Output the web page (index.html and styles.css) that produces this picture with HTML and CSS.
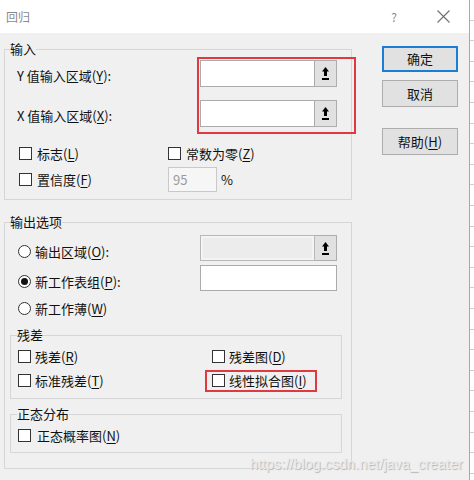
FILE: index.html
```html
<!DOCTYPE html>
<html lang="zh-CN">
<head>
<meta charset="utf-8">
<title>回归</title>
<link rel="stylesheet" href="styles.css">
</head>
<body>
<div class="screen">
  <div class="dialog">
    <div class="titlebar">
      <span class="title">回归</span>
      <span class="tb-help">?</span>
      <svg class="tb-close" width="13" height="13" viewBox="0 0 13 13"><path d="M0.5 0.5 L12.5 12.5 M12.5 0.5 L0.5 12.5" stroke="#707070" stroke-width="1.1" fill="none"/></svg>
    </div>
    <div class="body">
      <div class="main">
        <fieldset class="group g-input">
          <legend>输入</legend>
          <div class="range-row">
            <span class="rlabel">Y 值输入区域(<u>Y</u>):</span>
            <div class="field"></div>
            <div class="pick"><svg width="7" height="13" viewBox="0 0 7 13"><polygon points="3.5,0 7,4.5 5,4.5 5,9 2,9 2,4.5 0,4.5" fill="#000"/><rect x="0" y="11" width="7" height="2" fill="#000"/></svg></div>
          </div>
          <div class="range-row r-x">
            <span class="rlabel">X 值输入区域(<u>X</u>):</span>
            <div class="field"></div>
            <div class="pick"><svg width="7" height="13" viewBox="0 0 7 13"><polygon points="3.5,0 7,4.5 5,4.5 5,9 2,9 2,4.5 0,4.5" fill="#000"/><rect x="0" y="11" width="7" height="2" fill="#000"/></svg></div>
          </div>
          <div class="checks">
            <span class="chk"><span class="box"></span><span class="t">标志(<u>L</u>)</span></span>
            <span class="chk"><span class="box"></span><span class="t">常数为零(<u>Z</u>)</span></span>
            <span class="chk"><span class="box"></span><span class="t">置信度(<u>F</u>)</span></span>
            <span class="conf"><span class="num">95</span><span class="pct">%</span></span>
          </div>
        </fieldset>

        <fieldset class="group g-output">
          <legend>输出选项</legend>
          <div class="opts">
            <span class="opt"><span class="radio"></span><span class="t">输出区域(<u>O</u>):</span></span>
            <div class="field disabled"></div>
            <div class="pick"><svg width="7" height="13" viewBox="0 0 7 13"><polygon points="3.5,0 7,4.5 5,4.5 5,9 2,9 2,4.5 0,4.5" fill="#000"/><rect x="0" y="11" width="7" height="2" fill="#000"/></svg></div>
            <span class="opt"><span class="radio on"></span><span class="t">新工作表组(<u>P</u>):</span></span>
            <div class="field wide"></div>
            <span class="opt"><span class="radio"></span><span class="t">新工作薄(<u>W</u>)</span></span>
          </div>

          <fieldset class="sub g-resid">
            <legend>残差</legend>
            <div class="rchecks">
              <span class="chk"><span class="box"></span><span class="t">残差(<u>R</u>)</span></span>
              <span class="chk"><span class="box"></span><span class="t">残差图(<u>D</u>)</span></span>
              <span class="chk"><span class="box"></span><span class="t">标准残差(<u>T</u>)</span></span>
              <span class="chk marked"><span class="box"></span><span class="t">线性拟合图(<u>I</u>)</span><span class="mark mark-fit"></span></span>
            </div>
          </fieldset>

          <fieldset class="sub g-normal">
            <legend>正态分布</legend>
            <div class="nchecks">
              <span class="chk"><span class="box"></span><span class="t">正态概率图(<u>N</u>)</span></span>
            </div>
          </fieldset>
        </fieldset>
        <div class="mark mark-inputs"></div>
      </div>
      <div class="buttons">
        <div class="btn default">确定</div>
        <div class="btn b-cancel">取消</div>
        <div class="btn b-help">帮助(<u>H</u>)</div>
      </div>
    </div>
    <div class="watermark">https://blog.csdn.net/java_creater</div>
  </div>
  <div class="sheet"></div>
</div>
</body>
</html>
```

FILE: styles.css
```css
* { box-sizing: border-box; }
html, body { margin: 0; padding: 0; background: #f0f0f0; }
body {
  font-family: "Noto Sans CJK SC", "Microsoft YaHei", sans-serif;
  font-size: 13px;
  line-height: 16px;
  color: #111;
}
u { text-decoration-thickness: 1px; text-underline-offset: 2px; }

.screen { display: flex; width: 474px; height: 480px; overflow: hidden; }
.dialog {
  width: 469px; height: 480px; background: #f0f0f0;
  position: relative; display: flex; flex-direction: column;
}
.sheet {
  width: 5px; height: 480px;
  border-left: 1px solid #a8a8a8;
  background: #fff repeating-linear-gradient(to bottom, transparent 0 19.6px, #cfcfcf 19.6px 20.6px);
}

.titlebar {
  height: 33px; flex: none; background: #fff;
  display: flex; align-items: center; padding-left: 6px;
}
.title { flex: 1; font-size: 12px; color: #8a8a8a; }
.tb-help { width: 8px; font-size: 12px; color: #8a8a8a; margin-right: 39px; text-align: center; }
.tb-close { margin-right: 19px; }

.body { flex: 1; display: flex; padding-left: 4px; }
.main { width: 348px; padding-top: 8px; position: relative; }

.group {
  margin: 0; padding: 0 0 7px 0; min-width: 0;
  border: 1px solid #d6d6d6;
}
.group > legend { padding: 0; margin-left: 5px; height: 16px; line-height: 16px; }

.range-row {
  display: grid; grid-template-columns: 183px 115px 22px;
  padding-left: 12px; height: 27px; align-items: center; margin-top: 3px;
}
.range-row.r-x { margin-top: 13px; }
.rlabel { margin-top: 4px; }

.field { height: 100%; background: #fff; border: 1px solid #ababab; }
.field.disabled { background: #ececec; border-color: #b8b8b8; box-shadow: inset 0 0 0 2px #f4f4f4; }
.field.wide { grid-column: 2 / 4; }
.pick {
  height: 100%; background: #e1e1e1; border: 1px solid #adadad; border-left: none;
  display: flex; align-items: center; justify-content: center;
}

.checks {
  display: grid; grid-template-columns: 149px auto; grid-auto-rows: 25px; row-gap: 1px;
  padding-left: 14px; margin-top: 14px;
}
.chk { display: flex; align-items: center; gap: 5px; position: relative; }
.box { width: 13px; height: 13px; background: #fff; border: 1px solid #333; flex: none; }
.conf { display: flex; align-items: center; }
.num {
  width: 49px; height: 25px; border: 1px solid #c9c9c9; background: #f6f6f6;
  color: #9a9a9a; padding-left: 4px; display: flex; align-items: center;
}
.pct { margin-left: 4px; }

.mark { position: absolute; border: 2px solid #e03a40; pointer-events: none; }
.mark-inputs { left: 193px; top: 24px; width: 159px; height: 77px; }

.g-output { margin-top: 14px; padding-bottom: 15px; }
.opts {
  display: grid; grid-template-columns: 182px 115px 22px; grid-template-rows: 26px 26px 20px;
  row-gap: 4px; padding-left: 13px; margin-top: 5px; align-items: center;
}
.opts .field, .opts .pick { height: 26px; }
.opt { display: flex; align-items: center; gap: 4px; margin-top: 7px; }
.radio {
  width: 13px; height: 13px; border-radius: 50%; border: 1px solid #333; background: #fff;
  flex: none; display: flex; align-items: center; justify-content: center;
}
.radio.on::after { content: ""; width: 7px; height: 7px; border-radius: 50%; background: #111; }

.sub {
  margin: 12px 9px 0 5px; padding: 0 0 6px 0; min-width: 0;
  border: 1px solid #d6d6d6;
}
.sub > legend { padding: 0; margin-left: 6px; height: 16px; line-height: 16px; }
.rchecks {
  display: grid; grid-template-columns: 194px auto; grid-auto-rows: 23px; row-gap: 1px;
  padding-left: 7px; margin-top: 2px;
}
.rchecks .chk { gap: 4px; }
.mark-fit { left: -7px; top: 1px; width: 112px; height: 22px; }

.g-normal { margin-top: 7px; padding-bottom: 5px; }
.nchecks { display: grid; grid-auto-rows: 23px; padding-left: 7px; margin-top: 2px; }
.nchecks .chk { gap: 6px; }

.buttons { margin-left: 30px; padding-top: 13px; width: 76px; display: flex; flex-direction: column; }
.btn {
  height: 27px; background: #e1e1e1; border: 1px solid #adadad;
  display: flex; align-items: center; justify-content: center;
}
.btn.default { height: 26px; border: 2px solid #1a7fd4; }
.btn.b-cancel { margin-top: 8px; }
.btn.b-help { margin-top: 21px; }

.watermark {
  position: absolute; right: 6px; top: 456px;
  font-family: "Liberation Sans", Arial, sans-serif; font-size: 14px; line-height: 16px;
  color: #ececec; text-shadow: 1px 1px 1px #b4b4b4; letter-spacing: 0.2px;
}
```
